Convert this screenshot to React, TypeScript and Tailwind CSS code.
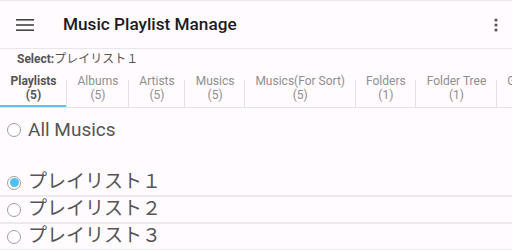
const tabs = [
  { label: "Playlists", count: 5, active: true },
  { label: "Albums", count: 5 },
  { label: "Artists", count: 5 },
  { label: "Musics", count: 5 },
  { label: "Musics(For Sort)", count: 5 },
  { label: "Folders", count: 1 },
  { label: "Folder Tree", count: 1 },
  { label: "Genres", count: 1 },
];

const playlists = ["プレイリスト１", "プレイリスト２", "プレイリスト３"];

function Radio({ checked }: { checked?: boolean }) {
  return (
    <span className="flex h-[14px] w-[14px] shrink-0 items-center justify-center rounded-full border border-[#9e9e9e] bg-white">
      {checked && <span className="h-[9px] w-[9px] rounded-full bg-[#4fc1ec]" />}
    </span>
  );
}

export default function App() {
  return (
    <div
      className="h-[250px] w-[512px] overflow-hidden bg-[#fffbfe] text-[#333]"
      style={{ fontFamily: 'Roboto, "Noto Sans CJK JP", sans-serif' }}
    >
      {/* App bar */}
      <div className="flex h-[49px] items-center border-t border-b border-[#e8e6e8] pl-[16px] pr-[14px]">
        <svg width="18" height="12" viewBox="0 0 18 12" className="shrink-0">
          <rect x="0" y="0" width="18" height="1.6" fill="#444" />
          <rect x="0" y="5.2" width="18" height="1.6" fill="#444" />
          <rect x="0" y="10.4" width="18" height="1.6" fill="#444" />
        </svg>
        <h1 className="ml-[29px] flex-1 pt-[1px] text-[17.2px] font-medium text-[#1c1b1f]">Music Playlist Manage</h1>
        <svg width="4" height="14" viewBox="0 0 4 14">
          <circle cx="2" cy="2" r="1.6" fill="#555" />
          <circle cx="2" cy="7" r="1.6" fill="#555" />
          <circle cx="2" cy="12" r="1.6" fill="#555" />
        </svg>
      </div>

      {/* Selected */}
      <div className="h-[20px] pl-[17px] pt-[2px] text-[12px] leading-[16px] text-[#555]">
        <span className="font-bold">Select:</span>プレイリスト１
      </div>

      {/* Tabs */}
      <div className="flex h-[39px] border-b border-[#e3e3e3] whitespace-nowrap">
        {tabs.map((t, i) => (
          <div
            key={t.label}
            className={`relative flex shrink-0 flex-col items-center px-[10.5px] pt-[5px] text-[12px] leading-[14px] ${
              t.active ? "border-b-2 border-[#5ac4ee] font-bold text-[#555]" : "text-[#8f8f8f]"
            }`}
          >
            <span>{t.label}</span>
            <span>({t.count})</span>
            {i < tabs.length - 1 && (
              <span className="absolute right-0 top-[11px] h-[27px] w-px bg-[#e3e3e3]" />
            )}
          </div>
        ))}
      </div>

      {/* All musics */}
      <div className="mt-[10px] flex h-[24px] items-center gap-[7px] pl-[7px] text-[19px] text-[#555]">
        <Radio />
        <span>All Musics</span>
      </div>

      {/* Playlists */}
      <div className="mt-[28px]">
        {playlists.map((p, i) => (
          <div
            key={p}
            className="flex h-[27px] items-center gap-[7px] border-b-2 border-[#ebe9eb] pl-[7px] text-[19px] text-[#555]"
          >
            <Radio checked={i === 0} />
            <span>{p}</span>
          </div>
        ))}
      </div>
    </div>
  );
}
